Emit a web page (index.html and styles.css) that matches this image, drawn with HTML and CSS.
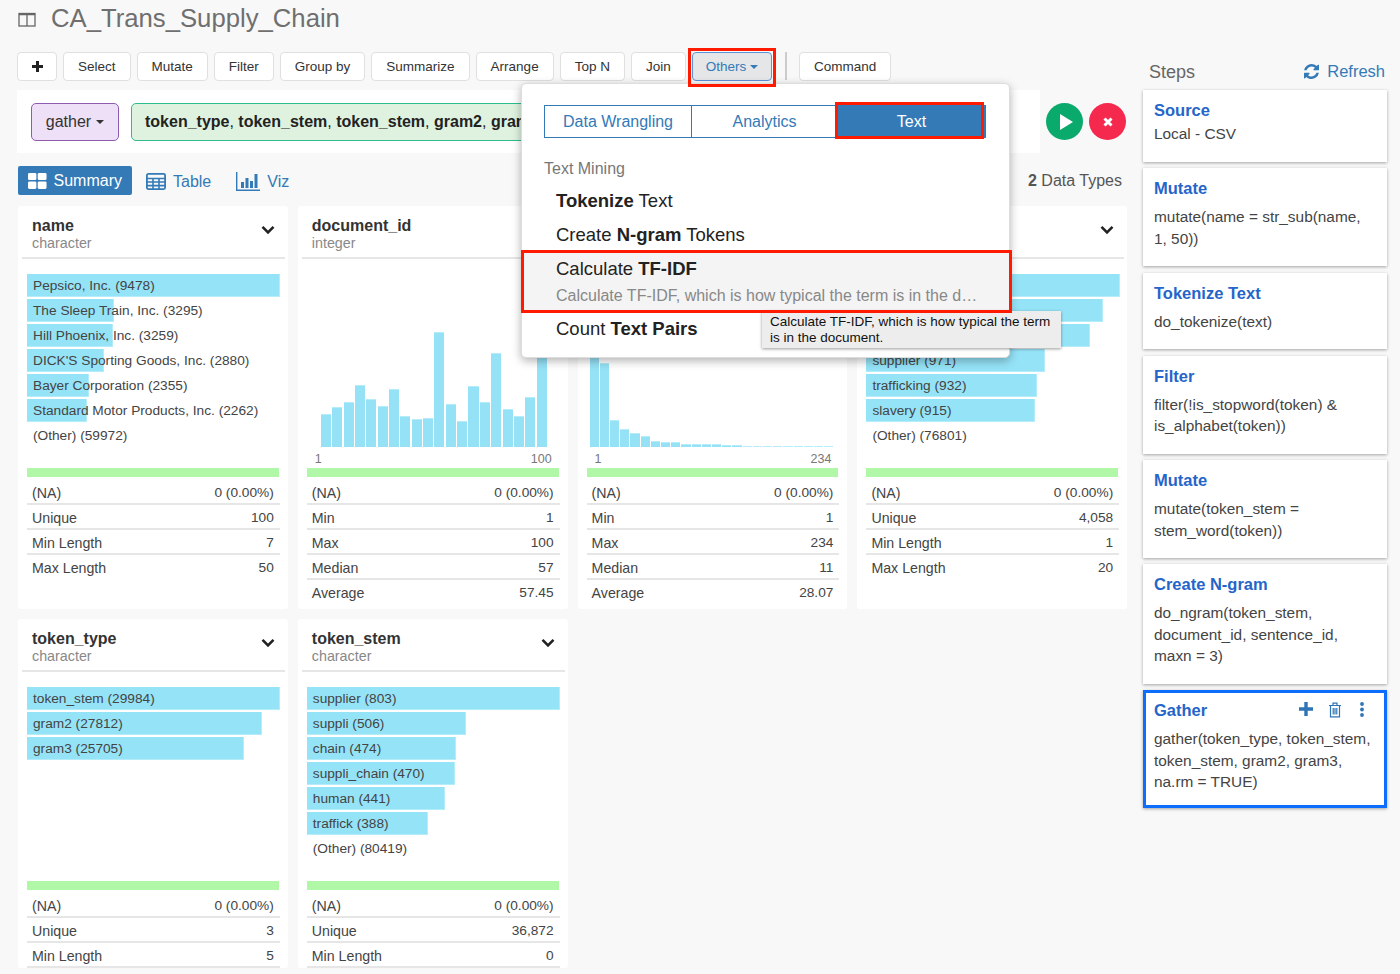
FILE: index.html
```html
<!DOCTYPE html>
<html lang="en">
<head>
<meta charset="utf-8">
<title>CA_Trans_Supply_Chain</title>
<link rel="stylesheet" href="styles.css">
</head>
<body>
<div class="layout">
  <main class="main">
    <header class="title-row">
      <svg class="title-icon" width="18" height="15" viewBox="0 0 18 15"><rect x="1" y="1.5" width="16" height="12.5" fill="none" stroke="#666" stroke-width="1.3"/><path d="M1 2.5h16M9 2v12" stroke="#666" stroke-width="1.3" fill="none"/></svg>
      <h1 class="title">CA_Trans_Supply_Chain</h1>
    </header>
    <nav class="toolbar">
      <button class="btn btn-plus"><svg width="11" height="11" viewBox="0 0 11 11"><path d="M5.5 0v11M0 5.5h11" stroke="#222" stroke-width="3"/></svg></button>
      <button class="btn">Select</button>
      <button class="btn">Mutate</button>
      <button class="btn">Filter</button>
      <button class="btn">Group by</button>
      <button class="btn">Summarize</button>
      <button class="btn">Arrange</button>
      <button class="btn">Top N</button>
      <button class="btn">Join</button>
      <button class="btn btn-active">Others <span class="caret"></span></button>
      <span class="tool-sep"></span>
      <button class="btn">Command</button>
    </nav>
    <section class="command-row">
      <div class="command-panel">
        <div class="verb">gather <span class="caret caret-dark"></span></div>
        <div class="args"><b>token_type</b>, <b>token_stem</b>, <b>token_stem</b>, <b>gram2</b>, <b>gram3</b></div>
      </div>
      <div class="run-buttons">
        <span class="round round-go"><svg width="14" height="16" viewBox="0 0 14 16"><path d="M1 0l13 8-13 8z" fill="#fff"/></svg></span>
        <span class="round round-stop"><svg width="10" height="10" viewBox="0 0 10 10"><path d="M1.5 1.5l7 7M8.500 1.500l-7 7" stroke="#fff" stroke-width="3"/></svg></span>
      </div>
    </section>
    <section class="view-row">
      <a class="view view-on"><svg width="21" height="18" viewBox="0 0 21 18"><g fill="#fff"><rect width="9.500" height="8" rx="1.500"/><rect x="11" width="10" height="8" rx="1.500"/><rect y="9.500" width="9.500" height="8.500" rx="1.500"/><rect x="11" y="9.500" width="10" height="8.500" rx="1.500"/></g></svg>Summary</a>
      <a class="view"><svg width="20" height="17" viewBox="0 0 20 17"><rect x=".9" y=".9" width="18.200" height="15.200" rx="1.500" fill="none" stroke="#337ab7" stroke-width="1.800"/><path d="M.8 5.500h18.400M.8 9h18.400M.8 12.600h18.400M7 5v11M13 5v11" stroke="#337ab7" stroke-width="1.600" fill="none"/></svg>Table</a>
      <a class="view"><svg width="24" height="19" viewBox="0 0 24 19"><path d="M.7 0v18.300H24" fill="none" stroke="#337ab7" stroke-width="1.400"/><path d="M5 10h3v6H5zM9.500 6h3v10h-3zM14 9h3v7h-3zM18.500 2h3v14h-3z" fill="#337ab7"/></svg>Viz</a>
      <span class="types"><b>2</b> Data Types</span>
    </section>
    <section class="cards">

      <article class="card">
        <div class="card-head"><div><div class="col-name">name</div><div class="col-type">character</div></div><svg class="chev" width="14" height="10" viewBox="0 0 14 10"><path d="M1.500 1.800L7 7.300l5.500-5.500" fill="none" stroke="#222" stroke-width="2.600"/></svg></div>
        <div class="chart">
          <div class="bar-row"><i class="fill" style="width:253px"></i><span>Pepsico, Inc. (9478)</span></div>
          <div class="bar-row"><i class="fill" style="width:87px"></i><span>The Sleep Train, Inc. (3295)</span></div>
          <div class="bar-row"><i class="fill" style="width:86px"></i><span>Hill Phoenix, Inc. (3259)</span></div>
          <div class="bar-row"><i class="fill" style="width:77px"></i><span>DICK'S Sporting Goods, Inc. (2880)</span></div>
          <div class="bar-row"><i class="fill" style="width:62px"></i><span>Bayer Corporation (2355)</span></div>
          <div class="bar-row"><i class="fill" style="width:60px"></i><span>Standard Motor Products, Inc. (2262)</span></div>
          <div class="bar-row"><span>(Other) (59972)</span></div>
        </div>
        <div class="green"></div>
        <dl class="stats">
          <div><dt>(NA)</dt><dd>0 (0.00%)</dd></div>
          <div><dt>Unique</dt><dd>100</dd></div>
          <div><dt>Min Length</dt><dd>7</dd></div>
          <div><dt>Max Length</dt><dd>50</dd></div>
        </dl>
      </article>

      <article class="card">
        <div class="card-head"><div><div class="col-name">document_id</div><div class="col-type">integer</div></div></div>
        <div class="chart chart-hist">
          <div class="hist hist-a">
            <i style="height:33px"></i><i style="height:40px"></i><i style="height:45px"></i><i style="height:62px"></i><i style="height:48px"></i><i style="height:41px"></i><i style="height:58px"></i><i style="height:31px"></i><i style="height:28px"></i><i style="height:29px"></i><i style="height:115px"></i><i style="height:43px"></i><i style="height:26px"></i><i style="height:61px"></i><i style="height:45px"></i><i style="height:94px"></i><i style="height:38px"></i><i style="height:31px"></i><i style="height:50px"></i><i style="height:100px"></i>
          </div>
          <div class="hist-axis"><span>1</span><span>100</span></div>
        </div>
        <div class="green"></div>
        <dl class="stats">
          <div><dt>(NA)</dt><dd>0 (0.00%)</dd></div>
          <div><dt>Min</dt><dd>1</dd></div>
          <div><dt>Max</dt><dd>100</dd></div>
          <div><dt>Median</dt><dd>57</dd></div>
          <div><dt>Average</dt><dd>57.45</dd></div>
        </dl>
      </article>

      <article class="card">
        <div class="card-head"></div>
        <div class="chart chart-hist">
          <div class="hist hist-b">
            <i style="height:115px"></i><i style="height:84px"></i><i style="height:27px"></i><i style="height:18px"></i><i style="height:14px"></i><i style="height:11px"></i><i style="height:6px"></i><i style="height:5px"></i><i style="height:5px"></i><i style="height:3px"></i><i style="height:3px"></i><i style="height:3px"></i><i style="height:3px"></i><i style="height:2px"></i><i style="height:2px"></i><i style="height:1px"></i><i style="height:1px"></i><i style="height:1px"></i><i style="height:1px"></i><i style="height:1px"></i><i style="height:1px"></i><i style="height:1px"></i><i style="height:1px"></i><i style="height:1px"></i>
          </div>
          <div class="hist-axis"><span>1</span><span>234</span></div>
        </div>
        <div class="green"></div>
        <dl class="stats">
          <div><dt>(NA)</dt><dd>0 (0.00%)</dd></div>
          <div><dt>Min</dt><dd>1</dd></div>
          <div><dt>Max</dt><dd>234</dd></div>
          <div><dt>Median</dt><dd>11</dd></div>
          <div><dt>Average</dt><dd>28.07</dd></div>
        </dl>
      </article>

      <article class="card">
        <div class="card-head card-head-end"><svg class="chev" width="14" height="10" viewBox="0 0 14 10"><path d="M1.500 1.800L7 7.300l5.500-5.500" fill="none" stroke="#222" stroke-width="2.600"/></svg></div>
        <div class="chart">
          <div class="bar-row"><i class="fill" style="width:254px"></i></div>
          <div class="bar-row"><i class="fill" style="width:237px"></i></div>
          <div class="bar-row"><i class="fill" style="width:224px"></i></div>
          <div class="bar-row"><i class="fill" style="width:179px"></i><span>supplier (971)</span></div>
          <div class="bar-row"><i class="fill" style="width:171px"></i><span>trafficking (932)</span></div>
          <div class="bar-row"><i class="fill" style="width:169px"></i><span>slavery (915)</span></div>
          <div class="bar-row"><span>(Other) (76801)</span></div>
        </div>
        <div class="green"></div>
        <dl class="stats">
          <div><dt>(NA)</dt><dd>0 (0.00%)</dd></div>
          <div><dt>Unique</dt><dd>4,058</dd></div>
          <div><dt>Min Length</dt><dd>1</dd></div>
          <div><dt>Max Length</dt><dd>20</dd></div>
        </dl>
      </article>

      <article class="card card-short">
        <div class="card-head"><div><div class="col-name">token_type</div><div class="col-type">character</div></div><svg class="chev" width="14" height="10" viewBox="0 0 14 10"><path d="M1.500 1.800L7 7.300l5.500-5.500" fill="none" stroke="#222" stroke-width="2.600"/></svg></div>
        <div class="chart">
          <div class="bar-row"><i class="fill" style="width:253px"></i><span>token_stem (29984)</span></div>
          <div class="bar-row"><i class="fill" style="width:235px"></i><span>gram2 (27812)</span></div>
          <div class="bar-row"><i class="fill" style="width:217px"></i><span>gram3 (25705)</span></div>
        </div>
        <div class="green"></div>
        <dl class="stats">
          <div><dt>(NA)</dt><dd>0 (0.00%)</dd></div>
          <div><dt>Unique</dt><dd>3</dd></div>
          <div><dt>Min Length</dt><dd>5</dd></div>
        </dl>
      </article>

      <article class="card card-short">
        <div class="card-head"><div><div class="col-name">token_stem</div><div class="col-type">character</div></div><svg class="chev" width="14" height="10" viewBox="0 0 14 10"><path d="M1.500 1.800L7 7.300l5.500-5.500" fill="none" stroke="#222" stroke-width="2.600"/></svg></div>
        <div class="chart">
          <div class="bar-row"><i class="fill" style="width:253px"></i><span>supplier (803)</span></div>
          <div class="bar-row"><i class="fill" style="width:159px"></i><span>suppli (506)</span></div>
          <div class="bar-row"><i class="fill" style="width:149px"></i><span>chain (474)</span></div>
          <div class="bar-row"><i class="fill" style="width:148px"></i><span>suppli_chain (470)</span></div>
          <div class="bar-row"><i class="fill" style="width:138px"></i><span>human (441)</span></div>
          <div class="bar-row"><i class="fill" style="width:121px"></i><span>traffick (388)</span></div>
          <div class="bar-row"><span>(Other) (80419)</span></div>
        </div>
        <div class="green"></div>
        <dl class="stats">
          <div><dt>(NA)</dt><dd>0 (0.00%)</dd></div>
          <div><dt>Unique</dt><dd>36,872</dd></div>
          <div><dt>Min Length</dt><dd>0</dd></div>
        </dl>
      </article>
    </section>
  </main>

  <aside class="side">
    <div class="side-head">
      <span class="steps-label">Steps</span>
      <a class="refresh"><svg width="15" height="15" viewBox="0 0 1536 1536"><path fill="#337ab7" d="M1511 928q0 5-1 7-64 268-268 434.500t-478 166.500q-146 0-282.500-55t-243.500-157l-129 129q-19 19-45 19t-45-19-19-45v-448q0-26 19-45t45-19h448q26 0 45 19t19 45-19 45l-137 137q71 66 161 102t187 36q134 0 250-65t186-179q11-17 53-117 8-23 30-23h192q13 0 22.500 9.500t9.500 22.500zm25-800v448q0 26-19 45t-45 19h-448q-26 0-45-19t-19-45 19-45l138-138q-148-137-349-137-134 0-250 65t-186 179q-11 17-53 117-8 23-30 23h-199q-13 0-22.500-9.500t-9.500-22.500v-7q65-268 270-434.500t480-166.500q146 0 284 55.500t245 156.500l130-129q19-19 45-19t45 19 19 45z"/></svg>Refresh</a>
    </div>
    <div class="step step-source"><h3>Source</h3><p>Local - CSV</p></div>
    <div class="step"><h3>Mutate</h3><p>mutate(name = str_sub(name,<br>1, 50))</p></div>
    <div class="step"><h3>Tokenize Text</h3><p>do_tokenize(text)</p></div>
    <div class="step"><h3>Filter</h3><p>filter(!is_stopword(token) &amp;<br>is_alphabet(token))</p></div>
    <div class="step"><h3>Mutate</h3><p>mutate(token_stem =<br>stem_word(token))</p></div>
    <div class="step"><h3>Create N-gram</h3><p>do_ngram(token_stem,<br>document_id, sentence_id,<br>maxn = 3)</p></div>
    <div class="step step-current">
      <div class="step-title-row">
        <h3>Gather</h3>
        <span class="step-tools">
          <svg width="14" height="14" viewBox="0 0 14 14"><path d="M7 0v14M0 7h14" stroke="#2f74b5" stroke-width="3.400"/></svg>
          <svg class="tool-trash" width="14" height="16" viewBox="0 0 14 16"><path d="M1 3.500h12M5 3.500V1.200h4v2.300M2.500 3.500v11.300h9V3.500M5.200 6v6.500M7 6v6.500M8.800 6v6.500" fill="none" stroke="#2f74b5" stroke-width="1.200"/></svg>
          <svg width="4" height="15" viewBox="0 0 4 15"><g fill="#2f74b5"><circle cx="2" cy="2" r="1.900"/><circle cx="2" cy="7.500" r="1.900"/><circle cx="2" cy="13" r="1.900"/></g></svg>
        </span>
      </div>
      <p>gather(token_type, token_stem,<br>token_stem, gram2, gram3,<br>na.rm = TRUE)</p>
    </div>
  </aside>
</div>

<div class="menu">
  <div class="menu-tabs">
    <span class="menu-tab">Data Wrangling</span>
    <span class="menu-tab">Analytics</span>
    <span class="menu-tab menu-tab-on">Text</span>
  </div>
  <div class="menu-heading">Text Mining</div>
  <div class="menu-item"><b>Tokenize</b> Text</div>
  <div class="menu-item">Create <b>N-gram</b> Tokens</div>
  <div class="menu-item menu-item-hover">Calculate <b>TF-IDF</b><small>Calculate TF-IDF, which is how typical the term is in the d…</small></div>
  <div class="menu-item">Count <b>Text Pairs</b></div>
</div>
<div class="tooltip">Calculate TF-IDF, which is how typical the term is in the document.</div>
<div class="mark mark-others"></div>
<div class="mark mark-text"></div>
<div class="mark mark-item"></div>
</body>
</html>
```
FILE: styles.css
```css
* { box-sizing: border-box; }
html, body { margin: 0; height: 974px; overflow: hidden; }
body {
  background: #f8f8f8;
  color: #444;
  font-family: "Liberation Sans", Arial, sans-serif;
  font-size: 14px;
  position: relative;
}
.layout { display: flex; padding-left: 17px; height: 974px; }
.main { width: 1111px; flex: none; display: flex; flex-direction: column; height: 968px; overflow: hidden; }
.side { width: 244px; flex: none; margin-left: 15px; padding-top: 58px; display: flex; flex-direction: column; gap: 6.4px; }

.title-row { height: 52px; display: flex; align-items: flex-start; flex: none; padding-top: 3px; }
.title-icon { margin: 9px 15px 0 1px; }
.title { margin: 0; font-size: 25.700px; font-weight: 400; line-height: 30px; color: #6f6f6f; }

.toolbar { display: flex; gap: 6px; height: 38px; flex: none; align-items: flex-start; }
.btn {
  height: 29px; padding: 0 14px; border: 1px solid #e0e0e0; border-radius: 4px; background: #fff;
  font: 13.500px "Liberation Sans", Arial, sans-serif; color: #333;
}
.btn-plus { width: 40px; padding: 0; display: flex; align-items: center; justify-content: center; }
.btn-active { padding: 0 13px; background: #e4e6e8; border: 1px solid #5b93d8; color: #337ab7; }
.caret { display: inline-block; width: 0; height: 0; border: 4.500px solid transparent; border-top-color: #337ab7; border-bottom: 0; vertical-align: 2px; }
.caret-dark { border-top-color: #333; }
.tool-sep { width: 2px; height: 28px; background: #ccc; margin: 0 6px 0 7px; }

.command-row { display: flex; height: 63px; flex: none; }
.command-panel { width: 1023px; background: #fff; display: flex; align-items: center; padding: 0 14px; gap: 12px; overflow: hidden; flex: none; }
.verb { width: 88px; height: 38px; flex: none; border: 1px solid #8e5bb0; border-radius: 5px; background: #eee0f7; display: flex; align-items: center; justify-content: center; gap: 5px; font-size: 16px; color: #333; }
.args { width: 850px; flex: none; height: 38px; border: 1px solid #2fbd8d; border-radius: 5px; background: #dff2e0; line-height: 36px; padding-left: 13px; font-size: 16px; color: #222; white-space: nowrap; }
.run-buttons { display: flex; gap: 6px; margin-left: 6px; align-items: center; height: 63px; }
.round { width: 37px; height: 37px; border-radius: 50%; display: flex; align-items: center; justify-content: center; }
.round-go { background: #0aa96c; padding-left: 3px; }
.round-stop { background: #f5284e; }

.view-row { height: 53px; flex: none; display: flex; align-items: flex-start; padding: 13px 6px 0 1px; }
.view { display: flex; align-items: center; gap: 7px; height: 29px; padding-top: 2px; color: #337ab7; font-size: 16px; margin-left: 14px; }
.view + .view + .view { margin-left: 25px; }
.view-on { background: #337ab7; color: #fff; margin-left: 0; padding: 0 10px; width: 114px; border-radius: 2px; }
.types { margin-left: auto; font-size: 16px; line-height: 29px; color: #555; }

.cards { display: grid; grid-template-columns: repeat(4, 269.800px); gap: 10px; margin-left: 1px; align-content: start; }
.card { background: #fff; border-radius: 3px; height: 403px; }
.card-short { height: 349px; overflow: hidden; }
.card-head { height: 53px; margin: 0 3px 0 4px; padding: 10px 10px 0 10px; border-bottom: 2px solid #e6e6e6; display: flex; justify-content: space-between; align-items: flex-start; }
.card-head-end { justify-content: flex-end; }
.chev { margin-top: 9px; }
.col-name { font-size: 16px; font-weight: 700; line-height: 19px; color: #333; }
.col-type { font-size: 14.300px; line-height: 17px; color: #888; }
.chart { height: 209px; padding: 15px 8px 0 9px; overflow: hidden; font-size: 13.700px; }
.bar-row { height: 23px; margin-bottom: 2px; position: relative; line-height: 23px; padding-left: 6px; white-space: nowrap; color: #444; }
.bar-row span { position: relative; }
.fill { position: absolute; left: 0; top: 0; bottom: 0; background: #95e3f7; border-right: 1px solid #b4ecfa; border-bottom: 1px solid #b4ecfa; }
.chart-hist { display: flex; flex-direction: column; justify-content: flex-end; padding: 0 0 2px 0; }
.hist { display: flex; align-items: flex-end; height: 120px; }
.hist i { flex: 1; background: #95e1f6; border-top: 1px solid #b4ecfa; }
.hist-a { gap: 1.300px; padding: 0 21px 0 23px; }
.hist-b { gap: 1.100px; padding: 0 14px 0 12px; }
.hist-axis { display: flex; justify-content: space-between; padding: 4px 16px 0 17px; height: 19px; font-size: 12.500px; line-height: 16px; color: #777; }
.green { height: 9px; margin: 0 9px; background: #b1f7a8; }
.stats { margin: 3px 8px 0 9px; font-size: 13.700px; }
.stats div { display: flex; justify-content: space-between; height: 25px; padding: 1px 6px 0 5px; border-bottom: 2px solid #e6e6e6; line-height: 24px; }
.stats div:last-child { border-bottom: 0; }
.card-short .stats div:last-child { border-bottom: 2px solid #e6e6e6; }
.stats dt, .stats dd { margin: 0; color: #444; }
.stats dt { font-size: 14.200px; }

.side-head { height: 26px; display: flex; justify-content: space-between; align-items: center; padding: 0 2px 0 6px; margin-bottom: -0.4px; }
.steps-label { font-size: 18px; color: #666; padding-top: 2px; }
.refresh { font-size: 16.500px; color: #337ab7; display: flex; align-items: center; gap: 8px; }
.step { background: #fff; box-shadow: 0 1px 3px rgba(0,0,0,.35); padding: 10px 11px 17px; }
.step h3 { margin: 0 0 8px; font-size: 16.500px; line-height: 20px; font-weight: 700; color: #2565c9; }
.step p { margin: 0; font-size: 15.400px; line-height: 21.500px; color: #444; white-space: nowrap; }
.step-source h3 { margin-bottom: 3px; }
.step-source { padding-bottom: 17.500px; }
.step-current { border: 3px solid #0d6efd; padding: 7px 8px 12.500px; }
.step-title-row { display: flex; justify-content: space-between; }
.step-tools { display: flex; gap: 15px; align-items: flex-start; padding: 2px 12px 0 0; }
.tool-trash { margin-right: 3px; }

.menu {
  position: absolute; left: 521px; top: 83px; width: 489px; height: 275px; background: #fff;
  border: 1px solid #ddd; border-radius: 5px; box-shadow: 0 3px 10px rgba(0,0,0,.3); padding-top: 21px;
}
.menu-tabs { display: flex; margin: 0 23px 0 22px; height: 33px; border: 1px solid #337ab7; }
.menu-tab { width: 146px; display: flex; align-items: center; justify-content: center; color: #337ab7; font-size: 16px; border-right: 1px solid #337ab7; }
.menu-tab:first-child { width: 147px; }
.menu-tab-on { flex: 1; background: #337ab7; color: #fff; border-right: 0; }
.menu-heading { margin: 21px 0 0 22px; height: 25px; line-height: 20px; font-size: 16px; color: #777; }
.menu-item { padding-left: 34px; height: 34px; line-height: 34px; font-size: 18.500px; color: #222; }
.menu-item-hover { height: 60px; background: #f4f4f4; }
.menu-item small { display: block; font-size: 16px; line-height: 20px; color: #888; }

.tooltip { position: absolute; left: 762px; top: 311px; width: 299px; height: 37px; padding: 3px 8px; background: #ededed; box-shadow: 0 1px 3px rgba(0,0,0,.4); font-size: 13.500px; line-height: 16px; color: #111; }
.mark { position: absolute; border: 3px solid #ff1a00; pointer-events: none; }
.mark-others { left: 688px; top: 48px; width: 88px; height: 39px; }
.mark-text { left: 835px; top: 102px; width: 149px; height: 37px; }
.mark-item { left: 521px; top: 250px; width: 491px; height: 63px; }
```
